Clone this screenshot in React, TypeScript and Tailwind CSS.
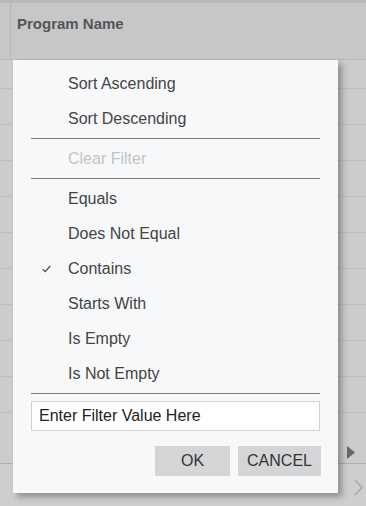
import { useState } from 'react'

const ops = ['Equals', 'Does Not Equal', 'Contains', 'Starts With', 'Is Empty', 'Is Not Empty']

function Separator() {
  return <div className="mx-[18px] my-[2px] h-px bg-[#7a7a7a]" />
}

function MenuItem({ label, checked, disabled }: { label: string; checked?: boolean; disabled?: boolean }) {
  return (
    <div
      className={
        'relative flex h-[35px] items-center pl-[55px] text-[16px] ' +
        (disabled ? 'text-[#c3c4c6]' : 'text-[#444444]')
      }
    >
      {checked && (
        <svg className="absolute left-[29px] top-[14px] h-[8px] w-[9px]" viewBox="0 0 9 8" fill="none">
          <path d="M0.8 4.2 L3.3 6.6 L8.2 1" stroke="#555" strokeWidth="1.4" />
        </svg>
      )}
      {label}
    </div>
  )
}

export default function App() {
  const [value, setValue] = useState('Enter Filter Value Here')
  const rows = Array.from({ length: 9 })

  return (
    <div
      className="relative h-[506px] w-[366px] overflow-hidden bg-[#cbcccc]"
      style={{ fontFamily: '"Liberation Sans", Arial, sans-serif' }}
    >
      {/* grid header */}
      <div className="flex h-[60px] border-t-[3px] border-b border-[#b9baba] bg-[#c6c7c8]">
        <div className="w-[11px] border-r border-[#b5b6b6]" />
        <div className="pl-[6px] pt-[10px] text-[15px] font-bold text-[#555555]">Program Name</div>
      </div>

      {/* grid rows */}
      <div className="h-[29px] border-b border-[#bdbebe]" />
      {rows.map((_, i) => (
        <div key={i} className="h-[36px] border-b border-[#bdbebe]" />
      ))}
      <div className="relative h-[51px] border-b border-[#aeafaf]">
        <svg className="absolute right-[11px] top-[33px] h-[13px] w-[8px]" viewBox="0 0 8 13">
          <path d="M0 0 L8 6.5 L0 13 Z" fill="#666" />
        </svg>
      </div>
      <div className="relative h-[42px] bg-[#cdcece]">
        <svg className="absolute right-[3px] top-[15px] h-[17px] w-[9px]" viewBox="0 0 9 17" fill="none">
          <path d="M1 1 L8 8.5 L1 16" stroke="#a5a6a6" strokeWidth="1.3" />
        </svg>
      </div>

      {/* filter menu */}
      <div className="absolute left-[13px] top-[60px] w-[325px] bg-[#f7f8fa] pt-[6px] pb-[17px] shadow-[4px_4px_6px_rgba(0,0,0,0.3)]">
        <MenuItem label="Sort Ascending" />
        <MenuItem label="Sort Descending" />
        <Separator />
        <MenuItem label="Clear Filter" disabled />
        <Separator />
        {ops.map((op) => (
          <MenuItem key={op} label={op} checked={op === 'Contains'} />
        ))}
        <Separator />
        <div className="mx-[18px] mt-[7px]">
          <input
            className="h-[30px] w-full border border-[#cfd0d2] bg-white px-[7px] text-[16px] text-[#222] outline-none"
            value={value}
            onChange={(e) => setValue(e.target.value)}
          />
        </div>
        <div className="mx-[17px] mt-[15px] flex justify-end gap-[8px]">
          <button className="h-[30px] w-[75px] bg-[#d4d5d7] text-[16px] text-[#333]">OK</button>
          <button className="h-[30px] w-[83px] bg-[#d4d5d7] text-[16px] text-[#333]">CANCEL</button>
        </div>
      </div>
    </div>
  )
}
